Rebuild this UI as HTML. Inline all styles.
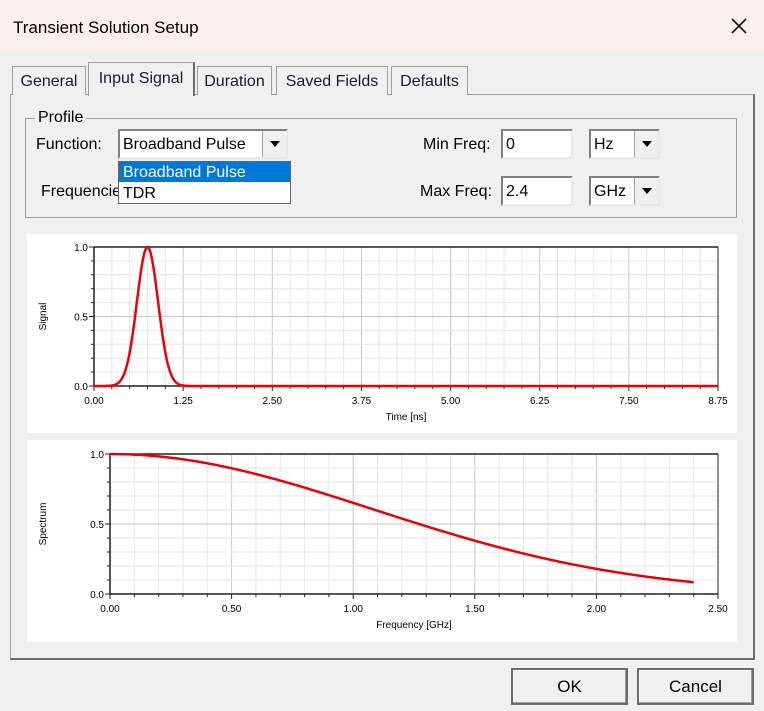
<!DOCTYPE html>
<html><head><style>
*{box-sizing:border-box;margin:0;padding:0}
body{width:764px;height:711px;background:#f0f0f0;font-family:"Liberation Sans",sans-serif;position:relative;overflow:hidden;color:#000}
.a{position:absolute}
.t{font-size:16px}
.tab{position:absolute;top:66px;height:29px;border:1px solid #a0a0a0;border-bottom:none;background:#f0f0f0;font-size:16px;padding:6px 0 0 0;text-align:center;color:#1a1a2e}
.inp{position:absolute;background:#fff;border:2px solid #808080;border-right-color:#e8e8e8;border-bottom-color:#e8e8e8;font-size:16px;padding:5px 3px 0}
.arr{position:absolute;top:0;right:0;width:24px;height:100%;background:#f0f0f0;border-left:1px solid #a0a0a0}
.arr:after{content:"";position:absolute;left:7px;top:10px;border:5px solid transparent;border-top:6px solid #000;border-bottom:none}
.btn{position:absolute;border:2px solid #6c6c6c;background:#f0f0f0;font-size:17px;text-align:center;padding-top:7px;box-shadow:inset -1px -1px #a0a0a0,inset 1px 1px #fff}
</style></head><body>
<div class="a" style="left:0;top:0;width:764px;height:52px;background:#f9f0ee"></div>
<div class="a t" style="left:13px;top:18px;font-size:17px">Transient Solution Setup</div>
<svg class="a" style="left:730px;top:17px" width="18" height="18"><path d="M2 2L16 16M16 2L2 16" stroke="#111" stroke-width="1.6"/></svg>

<div class="a" style="left:10px;top:94px;width:745px;height:566px;border:1px solid #a0a0a0;border-right:2px solid #6c6c6c;border-bottom:2px solid #6c6c6c"></div>
<div class="tab" style="left:12px;width:74px">General</div>
<div class="tab" style="left:88px;width:107px;top:62px;height:34px;border-right:2px solid #6c6c6c;padding-top:7px">Input Signal</div>
<div class="tab" style="left:197px;width:75px">Duration</div>
<div class="tab" style="left:276px;width:112px">Saved Fields</div>
<div class="tab" style="left:391px;width:77px">Defaults</div>

<div class="a" style="left:25px;top:118px;width:712px;height:100px;border:1px solid #a0a0a0"></div>
<div class="a t" style="left:35px;top:109px;background:#f0f0f0;padding:0 3px">Profile</div>
<div class="a t" style="left:36px;top:136px">Function:</div>
<div class="inp" style="left:118px;top:129px;width:170px;height:30px">Broadband Pulse<div class="arr"></div></div>
<div class="a t" style="left:41px;top:183px">Frequencie</div>
<div class="a" style="left:118px;top:161px;width:173px;height:43px;background:#fff;border:1px solid #646464"></div>
<div class="a t" style="left:119px;top:162px;width:171px;height:20px;background:#0078d7;color:#fff;padding:2px 0 0 4px">Broadband Pulse</div>
<div class="a t" style="left:123px;top:185px">TDR</div>

<div class="a t" style="left:423px;top:136px">Min Freq:</div>
<div class="inp" style="left:501px;top:129px;width:72px;height:30px">0</div>
<div class="inp" style="left:589px;top:129px;width:71px;height:30px">Hz<div class="arr"></div></div>
<div class="a t" style="left:420px;top:183px">Max Freq:</div>
<div class="inp" style="left:501px;top:176px;width:72px;height:30px">2.4</div>
<div class="inp" style="left:589px;top:176px;width:71px;height:30px">GHz<div class="arr"></div></div>

<svg class="a" style="left:0;top:0" width="764" height="711" id="s" font-family="Liberation Sans" font-size="10"></svg>

<div class="btn" style="left:511px;top:668px;width:117px;height:37px">OK</div>
<div class="btn" style="left:637px;top:668px;width:117px;height:37px">Cancel</div>
<script>
var s=document.getElementById('s'),h='';
function plot(px,py,pw,ph,x0,y0,x1,y1,xmax,nmaj,labels,xlab,ylab,f){
 h+='<rect x="'+px+'" y="'+py+'" width="'+pw+'" height="'+ph+'" fill="#fff"/>';
 var W=x1-x0,H=y1-y0,n=nmaj*5;
 for(var i=1;i<n;i++){var x=x0+W*i/n;h+='<line x1="'+x+'" y1="'+y0+'" x2="'+x+'" y2="'+y1+'" stroke="'+(i%5?'#e6e6e6':'#c8c8c8')+'"/>';}
 for(var j=1;j<10;j++){var y=y0+H*j/10;h+='<line x1="'+x0+'" y1="'+y+'" x2="'+x1+'" y2="'+y+'" stroke="'+(j==5?'#c8c8c8':'#e6e6e6')+'"/>';}
 h+='<line x1="'+x0+'" y1="'+y0+'" x2="'+x1+'" y2="'+y0+'" stroke="#222" stroke-width="1.5"/>';
 h+='<line x1="'+x0+'" y1="'+y1+'" x2="'+x1+'" y2="'+y1+'" stroke="#222" stroke-width="1.5"/>';
 h+='<line x1="'+x0+'" y1="'+y0+'" x2="'+x0+'" y2="'+y1+'" stroke="#222" stroke-width="1.5"/>';
 h+='<line x1="'+x1+'" y1="'+y0+'" x2="'+x1+'" y2="'+y1+'" stroke="#222" stroke-width="1"/>';
 for(var i=0;i<=n;i++){var x=x0+W*i/n;h+='<line x1="'+x+'" y1="'+y1+'" x2="'+x+'" y2="'+(y1+(i%5?3:5))+'" stroke="#222"/>';}
 for(var j=0;j<=10;j++){var y=y0+H*j/10;h+='<line x1="'+(x0-(j%5?3:5))+'" y1="'+y+'" x2="'+x0+'" y2="'+y+'" stroke="#222"/>';}
 for(var i=0;i<=nmaj;i++)h+='<text x="'+(x0+W*i/nmaj)+'" y="'+(y1+18)+'" text-anchor="middle">'+labels[i]+'</text>';
 ['1.0','0.5','0.0'].forEach(function(l,k){h+='<text x="'+(x0-6)+'" y="'+(y0+H*k/2+4)+'" text-anchor="end">'+l+'</text>';});
 h+='<text x="'+((x0+x1)/2)+'" y="'+(y1+34)+'" text-anchor="middle">'+xlab+'</text>';
 var cy=(y0+y1)/2,cx=px+19;
 h+='<text transform="translate('+cx+','+cy+') rotate(-90)" text-anchor="middle">'+ylab+'</text>';
 var d='';for(var i=0;i<=600;i++){var t=xmax*i/600,v=f(t);if(v===null)continue;d+=(d?'L':'M')+(x0+W*t/xmax).toFixed(1)+','+(y1-H*v).toFixed(1);}
 h+='<path d="'+d+'" fill="none" stroke="#e8000b" stroke-width="2.5"/>';
}
plot(27,234,710,199,94,247,718,386,8.75,7,['0.00','1.25','2.50','3.75','5.00','6.25','7.50','8.75'],'Time [ns]','Signal',function(t){return Math.exp(-Math.pow(t-0.75,2)/(2*0.022));});
plot(27,440,710,202,110,454,718,594,2.5,5,['0.00','0.50','1.00','1.50','2.00','2.50'],'Frequency [GHz]','Spectrum',function(t){return t>2.4?null:Math.exp(-t*t/2.33);});
s.innerHTML=h;
</script>
</body></html>
